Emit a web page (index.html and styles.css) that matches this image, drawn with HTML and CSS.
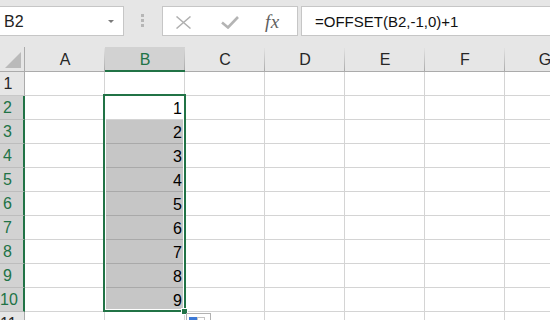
FILE: index.html
```html
<!DOCTYPE html>
<html>
<head>
<meta charset="utf-8">
<link rel="stylesheet" href="styles.css">
</head>
<body>
<div class="toolbar">
  <div class="namebox"><span class="nb-text">B2</span><span class="caret"></span></div>
  <div class="grip"><i></i><i></i><i></i></div>
  <div class="fbtns">
    <svg class="ico-x" width="15" height="13" viewBox="0 0 15 13"><path d="M0.5 0.5 L14.5 12.5 M14.5 0.5 L0.5 12.5" stroke="#b0b0b0" stroke-width="1.5" fill="none"/></svg>
    <svg class="ico-ok" width="18" height="13" viewBox="0 0 18 13"><polyline points="1,6.5 7,11.5 17,1" stroke="#b4b4b4" stroke-width="2.6" fill="none"/></svg>
    <span class="fx">fx</span>
  </div>
  <div class="finput">=OFFSET(B2,-1,0)+1</div>
</div>
<div class="sheet">
  <div class="corner"><svg width="24" height="24" viewBox="0 0 24 24"><polygon points="21,5 21,21 5,21" fill="#bababa"/></svg></div>
  <div class="h">A</div><div class="h sel">B</div><div class="h">C</div><div class="h">D</div><div class="h">E</div><div class="h">F</div><div class="h">G</div>

  <div class="r">1</div><div class="c"></div><div class="c"></div><div class="c"></div><div class="c"></div><div class="c"></div><div class="c"></div><div class="c"></div>
  <div class="r sel">2</div><div class="c"></div><div class="c">1</div><div class="c"></div><div class="c"></div><div class="c"></div><div class="c"></div><div class="c"></div>
  <div class="r sel">3</div><div class="c"></div><div class="c g">2</div><div class="c"></div><div class="c"></div><div class="c"></div><div class="c"></div><div class="c"></div>
  <div class="r sel">4</div><div class="c"></div><div class="c g">3</div><div class="c"></div><div class="c"></div><div class="c"></div><div class="c"></div><div class="c"></div>
  <div class="r sel">5</div><div class="c"></div><div class="c g">4</div><div class="c"></div><div class="c"></div><div class="c"></div><div class="c"></div><div class="c"></div>
  <div class="r sel">6</div><div class="c"></div><div class="c g">5</div><div class="c"></div><div class="c"></div><div class="c"></div><div class="c"></div><div class="c"></div>
  <div class="r sel">7</div><div class="c"></div><div class="c g">6</div><div class="c"></div><div class="c"></div><div class="c"></div><div class="c"></div><div class="c"></div>
  <div class="r sel">8</div><div class="c"></div><div class="c g">7</div><div class="c"></div><div class="c"></div><div class="c"></div><div class="c"></div><div class="c"></div>
  <div class="r sel">9</div><div class="c"></div><div class="c g">8</div><div class="c"></div><div class="c"></div><div class="c"></div><div class="c"></div><div class="c"></div>
  <div class="r sel">10</div><div class="c"></div><div class="c g">9</div><div class="c"></div><div class="c"></div><div class="c"></div><div class="c"></div><div class="c"></div>
  <div class="r">11</div><div class="c"></div><div class="c"></div><div class="c"></div><div class="c"></div><div class="c"></div><div class="c"></div><div class="c"></div>

  <div class="selection"></div>
  <div class="handle"></div>
  <div class="paste"><span class="pi-blue"></span><span class="pi-white"></span></div>
</div>
</body>
</html>
```
FILE: styles.css
```css
* { box-sizing: border-box; }
html, body { margin: 0; padding: 0; }
body {
  width: 550px;
  height: 320px;
  overflow: hidden;
  background: #e6e6e6;
  font-family: "Liberation Sans", Arial, sans-serif;
  color: #000;
}

/* formula bar */
.toolbar {
  height: 47px;
  padding-top: 6px;
  display: flex;
  align-items: flex-start;
}
.namebox {
  margin-left: -1px;
  width: 125px;
  height: 30px;
  background: #fff;
  border: 1px solid #c6c6c6;
  display: flex;
  align-items: center;
  padding-left: 4px;
}
.nb-text {
  font-size: 16px;
  line-height: 28px;
  padding-top: 1px;
  color: #222;
}
.caret {
  margin-left: auto;
  margin-right: 9px;
  width: 0;
  height: 0;
  border-left: 3px solid transparent;
  border-right: 3px solid transparent;
  border-top: 3px solid #7a7a7a;
}
.grip {
  margin-left: 17px;
  margin-top: 8px;
  display: flex;
  flex-direction: column;
  gap: 2px;
}
.grip i {
  display: block;
  width: 3px;
  height: 3px;
  background: #b6b6b6;
}
.fbtns {
  margin-left: 18px;
  width: 136px;
  height: 30px;
  background: #fff;
  border: 1px solid #c6c6c6;
  display: flex;
  align-items: flex-start;
}
.ico-x { margin-left: 13px; margin-top: 9px; }
.ico-ok { margin-left: 30px; margin-top: 9px; }
.fx {
  margin-left: 26px;
  font-family: "Liberation Serif", "Times New Roman", serif;
  font-style: italic;
  font-size: 19px;
  letter-spacing: 0.5px;
  line-height: 28px;
  padding-top: 1px;
  color: #5f5f5f;
}
.finput {
  margin-left: 3px;
  margin-right: -2px;
  flex: 1;
  height: 30px;
  background: #fff;
  border: 1px solid #c6c6c6;
  padding-left: 13px;
  padding-top: 2px;
  font-size: 15px;
  line-height: 26px;
  color: #111;
  white-space: nowrap;
}

/* sheet grid */
.sheet {
  position: relative;
  display: grid;
  grid-template-columns: 25px repeat(7, 80px);
  grid-template-rows: 25px repeat(11, 24px);
  font-size: 16px;
}
.corner {
  background: #e6e6e6;
  border-right: 1px solid #ababab;
  border-bottom: 1px solid #ababab;
}
.corner svg { display: block; }
.h {
  background: linear-gradient(#e2e2e2, #a8a8a8) right 1px / 1px 100% no-repeat, #e6e6e6;
  border-bottom: 1px solid #ababab;
  text-align: center;
  line-height: 26px;
  color: #262626;
}
.h.sel {
  background: linear-gradient(#d6d6d6, #a8a8a8) right 1px / 1px 100% no-repeat, #d2d2d2;
  color: #217346;
  border-bottom: 2px solid #217346;
}
.r {
  background: #e6e6e6;
  border-right: 1px solid #ababab;
  border-bottom: 1px solid #c8c8c8;
  text-align: center;
  padding-right: 8px;
  line-height: 23px;
  color: #262626;
  overflow: hidden;
}
.r.sel {
  background: #d2d2d2;
  color: #217346;
  border-right: 2px solid #217346;
  border-bottom-color: #bdbdbd;
}
.c {
  background: #fff;
  border-right: 1px solid #d4d4d4;
  border-bottom: 1px solid #d4d4d4;
  text-align: right;
  padding: 1px 2px 0 0;
  line-height: 23px;
  overflow: hidden;
}
.c.g {
  background: #c6c6c6;
  border-bottom-color: #a9a9a9;
}

/* overlays */
.selection {
  position: absolute;
  left: 103px;
  top: 47px;
  width: 83px;
  height: 218px;
  border: 2px solid #217346;
  box-shadow: inset 0 0 0 1px #fff;
  pointer-events: none;
}
.handle {
  position: absolute;
  left: 181px;
  top: 261px;
  width: 7px;
  height: 7px;
  background: #217346;
  border: 1px solid #fff;
}
.paste {
  position: absolute;
  left: 186px;
  top: 266px;
  width: 25px;
  height: 14px;
  background: #fff;
  border: 1px solid #b2b2b2;
  display: flex;
  align-items: flex-start;
  padding: 3px 0 0 2px;
}
.pi-blue {
  width: 8px;
  height: 6px;
  background: #3d79d6;
}
.pi-white {
  width: 8px;
  height: 6px;
  background: #fff;
  border: 1px solid #c4c4c4;
  border-bottom: none;
}
```
